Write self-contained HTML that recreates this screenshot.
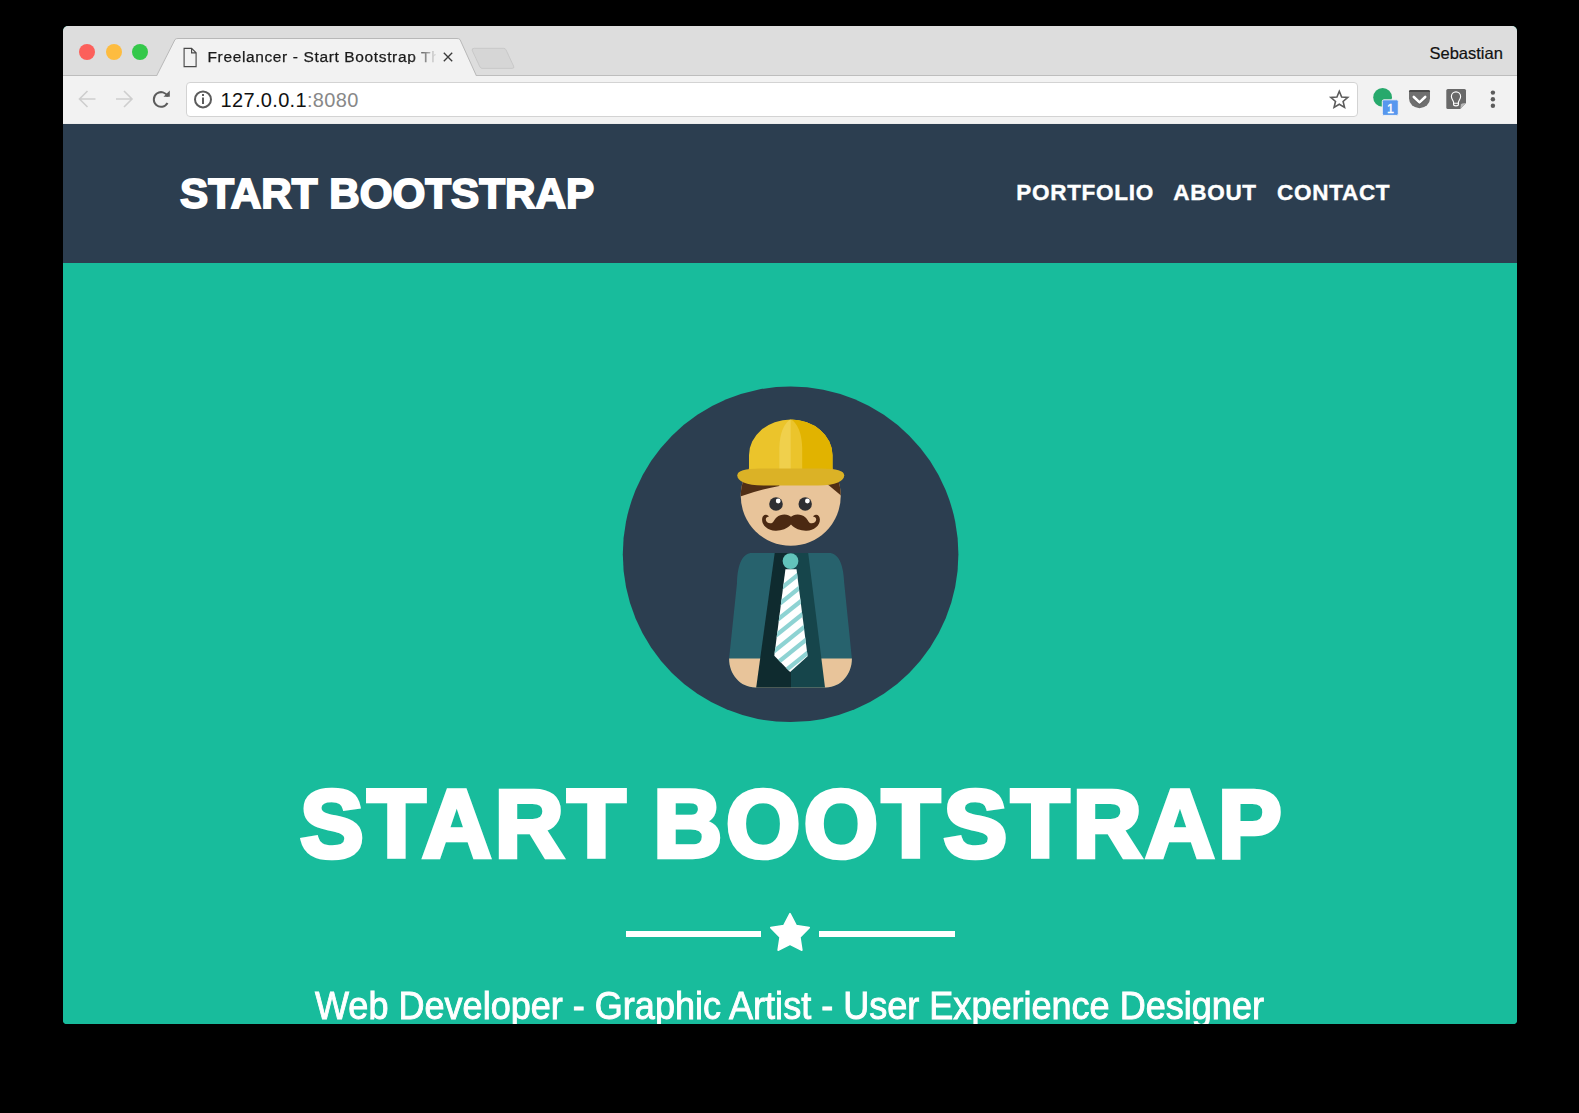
<!DOCTYPE html>
<html><head><meta charset="utf-8">
<style>
html,body{margin:0;padding:0;}
body{width:1579px;height:1113px;background:#000;position:relative;overflow:hidden;font-family:"Liberation Sans",sans-serif;}
.a{position:absolute;}
#win{left:63px;top:26px;width:1454px;height:998px;border-radius:5px 5px 4px 4px;overflow:hidden;background:#18bc9c;}
#tabstrip{left:0;top:0;width:1454px;height:50px;background:#dddddd;}
.tabline{left:0;top:49px;width:1454px;height:1px;background:#bdbdbd;}
#toolbar{left:0;top:50px;width:1454px;height:48px;background:#f2f2f2;}
#tbline{left:0;top:97px;width:1454px;height:1px;background:#ececec;}
#nav{left:0;top:98px;width:1454px;height:139px;background:#2c3e50;}
#hero{left:0;top:237px;width:1454px;height:761px;background:#18bc9c;}
.light{width:16px;height:16px;border-radius:50%;top:18px;}
#omni{left:122.5px;top:56px;width:1172px;height:35px;background:#fff;border:1px solid #d3d3d3;border-radius:4px;box-sizing:border-box;}
.t{white-space:nowrap;line-height:1;}
</style></head>
<body>
<div id="win" class="a">
  <div id="tabstrip" class="a"></div>
  <!-- active tab -->
  <svg class="a" style="left:0;top:0" width="1454" height="51">
    <path d="M93.5,50 L112,13.5 Q113,12.5 115,12.5 L394,12.5 Q396,12.5 397,13.5 L413.5,50 Z" fill="#f2f2f2"/>
    <path d="M93.5,50 L112,13.5 Q113,12.5 115,12.5 L394,12.5 Q396,12.5 397,13.5 L413.5,50" fill="none" stroke="#b8b8b8" stroke-width="1"/>
    <path d="M411.3,22.3 L440.5,22.3 Q442.3,22.3 443.1,24 L450.6,40.2 Q451.4,42.4 449.3,42.4 L419.3,42.4 Q417.6,42.4 416.8,40.7 L409.3,24.6 Q408.6,22.3 411.3,22.3 Z" fill="#d6d6d6" stroke="#c6c6c6" stroke-width="0.9"/>
  </svg>
  <div class="a tabline" style="width:94px;top:49px"></div>
  <div class="a tabline" style="left:413px;width:1041px"></div>
  <div class="a light" style="left:16px;background:#fc605b;"></div>
  <div class="a light" style="left:42.5px;background:#fdbc40;"></div>
  <div class="a light" style="left:69px;background:#34c84a;"></div>
  <div id="toolbar" class="a"></div>
  <div id="tbline" class="a"></div>
  <div id="omni" class="a"></div>

  <!-- tab contents -->
  <svg class="a" style="left:119.5px;top:21px" width="15" height="21" viewBox="0 0 15 21">
    <path d="M1.1,1.3 L8.6,1.3 L13.1,5.8 L13.1,19.6 L1.1,19.6 Z M8.6,1.3 L8.6,5.8 L13.1,5.8" fill="none" stroke="#4a4a4a" stroke-width="1.15" stroke-linejoin="miter"/>
  </svg>
  <div class="a t" style="left:144.5px;top:22.8px;font-size:15.5px;letter-spacing:0.63px;color:#1a1a1a;-webkit-text-stroke:0.25px #1a1a1a;width:228px;overflow:hidden;-webkit-mask-image:linear-gradient(to right,#000 0,#000 204px,rgba(0,0,0,0.08) 228px);">Freelancer - Start Bootstrap Th</div>
  <svg class="a" style="left:379px;top:25px" width="12" height="12" viewBox="0 0 12 12">
    <path d="M1.8,1.8 L10.2,10.2 M10.2,1.8 L1.8,10.2" stroke="#3a3a3a" stroke-width="1.35"/>
  </svg>
  <div class="a t" style="left:1366.5px;top:19.3px;font-size:16.5px;color:#111;-webkit-text-stroke:0.2px #111;">Sebastian</div>
  <!-- toolbar icons -->
  <svg class="a" style="left:0;top:49px" width="1454" height="48">
    <g fill="none" stroke="#cecece" stroke-width="1.6">
      <path d="M32.5,24 L16.5,24 M24.5,16 L16.5,24 L24.5,32"/>
      <path d="M53,24 L69,24 M61,16 L69,24 L61,32"/>
    </g>
    <g fill="none" stroke="#5c5c5c" stroke-width="2">
      <path d="M104.8,21.5 A7.3,7.3 0 1 0 104.5,28"/>
    </g>
    <path d="M100.5,21.8 L106.8,21.8 L106.8,15.6 Z" fill="#5c5c5c"/>
  </svg>
  <svg class="a" style="left:0;top:49px" width="1454" height="48">
    <circle cx="140" cy="24.4" r="8" fill="none" stroke="#5c5c5c" stroke-width="2"/>
    <rect x="139" y="22.5" width="2" height="6.5" fill="#5c5c5c"/>
    <rect x="139" y="19" width="2" height="2" fill="#5c5c5c"/>
    <path d="M1276.30,16.30 L1278.65,21.96 L1284.76,22.45 L1280.10,26.44 L1281.53,32.40 L1276.30,29.20 L1271.07,32.40 L1272.50,26.44 L1267.84,22.45 L1273.95,21.96 Z" fill="none" stroke="#5c5c5c" stroke-width="1.6" stroke-linejoin="miter"/>
    <circle cx="1319.6" cy="22.4" r="9.4" fill="#27a96c"/>
    <rect x="1319.3" y="24.8" width="16" height="15.6" rx="1.5" fill="#5797ee" stroke="#f2f2f2" stroke-width="1"/>
    <text x="1327.4" y="37.9" font-family="Liberation Sans" font-size="12.5" fill="#fff" stroke="#fff" stroke-width="0.4" text-anchor="middle">1</text>
    <path d="M1346,16.4 Q1346,14.9 1347.5,14.9 L1365.5,14.9 Q1367,14.9 1367,16.4 L1367,23.5 A10.5,9.7 0 0 1 1346,23.5 Z" fill="#6f6f6f"/>
    <path d="M1346,16.4 Q1346,14.9 1347.5,14.9 L1365.5,14.9 Q1367,14.9 1367,16.4 L1367,16.9 L1346,16.9 Z" fill="#4a4a4a"/>
    <path d="M1350.8,22.2 L1356.5,27.6 L1362.2,22.2" fill="none" stroke="#333" stroke-opacity="0.35" stroke-width="2.6" stroke-linecap="round" stroke-linejoin="round" transform="translate(0,0.8)"/>
    <path d="M1350.8,22 L1356.5,27.4 L1362.2,22" fill="none" stroke="#fff" stroke-width="2.6" stroke-linecap="round" stroke-linejoin="round"/>
    <path d="M1384.8,14 L1401.5,14 Q1403,14 1403,15.5 L1403,28.1 L1397.3,34 L1384.8,34 Q1383.3,34 1383.3,32.5 L1383.3,15.5 Q1383.3,14 1384.8,14 Z" fill="#696969"/>
    <path d="M1403,28.1 L1397.3,34 L1397.9,29.6 Q1398.1,28.6 1399.1,28.4 Z" fill="#b9b9b9"/>
    <path d="M1390.6,27.4 C1390.4,25.3 1388.4,24.3 1388.4,21.5 A4.6,4.6 0 0 1 1397.6,21.5 C1397.6,24.3 1395.6,25.3 1395.4,27.4 L1395.4,29.4 Q1395.4,30.8 1393,30.8 Q1390.6,30.8 1390.6,29.4 Z M1390.6,28.2 L1395.4,28.2" fill="none" stroke="#fff" stroke-width="1.15"/>
    <circle cx="1429.9" cy="17.6" r="2.2" fill="#5c5c5c"/>
    <circle cx="1429.9" cy="24.2" r="2.2" fill="#5c5c5c"/>
    <circle cx="1429.9" cy="30.8" r="2.2" fill="#5c5c5c"/>
  </svg>
  <div class="a t" style="left:157.5px;top:63.9px;font-size:20px;letter-spacing:0.34px;color:#111;">127.0.0.1<span style="color:#888">:8080</span></div>

  <div id="nav" class="a"></div>
  <div class="a t" style="left:117px;top:147px;font-size:42.2px;font-weight:bold;letter-spacing:0px;color:#fff;-webkit-text-stroke:1.9px #fff;">START BOOTSTRAP</div>
  <div class="a t" style="left:953.3px;top:156.2px;font-size:22.5px;font-weight:bold;letter-spacing:0.7px;color:#fff;-webkit-text-stroke:0.4px #fff;">PORTFOLIO</div>
  <div class="a t" style="left:1110.3px;top:156.2px;font-size:22.5px;font-weight:bold;letter-spacing:0.7px;color:#fff;-webkit-text-stroke:0.4px #fff;">ABOUT</div>
  <div class="a t" style="left:1214.1px;top:156.2px;font-size:22.5px;font-weight:bold;letter-spacing:0.7px;color:#fff;-webkit-text-stroke:0.4px #fff;">CONTACT</div>
  <div id="hero" class="a"></div>
  <div class="a t" style="left:237px;top:750.5px;font-size:95.5px;font-weight:bold;letter-spacing:3.6px;word-spacing:-6px;color:#fff;-webkit-text-stroke:4.6px #fff;">START BOOTSTRAP</div>

  <svg class="a" style="left:559px;top:360px" width="337" height="337" viewBox="622 386 337 337">
    <defs>
      <clipPath id="face"><circle cx="790.75" cy="495.8" r="50"/></clipPath>
      <clipPath id="dome"><path d="M749,476 L749,455 A41.75,35.5 0 0 1 832.5,455 L832.5,476 Z"/></clipPath>
      <clipPath id="body"><path d="M752,553 L829,553 C838,553 843.5,563 844.2,583 L851.9,658.5 C852,674 841,687.4 826,687.4 L755.5,687.4 C740,687.4 729,674 729.1,658.5 L737,583 C737.6,563 743,553 752,553 Z"/></clipPath>
      <clipPath id="tie"><path d="M785.4,569.3 L796.5,569.3 L807.6,656.3 L790.1,672 L774.3,655.7 Z"/></clipPath>
      <path id="mus" d="M791,524.6 C787,529 781,531 775.5,530.8 C768,530.5 762,525.5 762.1,519.5 C762.2,516 764,514.6 766,514.7 C767.5,514.8 768.8,515.8 768.8,516.8 C767.5,516.5 765.8,517.5 765.8,519.5 C765.8,522 768.5,523.6 771.2,523.2 C773.5,522.8 774.2,519.6 776.5,517.5 C779,515.4 781.5,514.6 784.4,514.6 C787.5,514.7 789.5,515.8 791,516.8 Z"/>
    </defs>
    <circle cx="790.6" cy="554.3" r="167.8" fill="#2c3e50"/>
    <!-- face -->
    <circle cx="790.75" cy="495.8" r="50" fill="#e8c49a"/>
    <g clip-path="url(#face)" fill="#512f15">
      <path d="M735,460 L735,497 L741,496.2 Q762,489 779.3,486 L779.3,460 Z"/>
      <path d="M826,460 L826,483 L841.5,496 L846,496 L846,460 Z"/>
    </g>
    <circle cx="776" cy="504" r="6.8" fill="#2e2f33"/>
    <circle cx="805.2" cy="504" r="6.7" fill="#2e2f33"/>
    <circle cx="778.2" cy="501" r="2.4" fill="#fff"/>
    <circle cx="807.4" cy="501" r="2.4" fill="#fff"/>
    <g fill="#4b2912">
      <use href="#mus"/>
      <use href="#mus" transform="translate(1582,0) scale(-1,1)"/>
    </g>
    <!-- helmet -->
    <g clip-path="url(#dome)">
      <rect x="745" y="415" width="95" height="65" fill="#ebc42b"/>
      <path d="M779.3,480 L779.3,448 Q780,426 790.7,419 L790.7,480 Z" fill="#f0d04c"/>
      <path d="M802.2,480 L802.2,448 Q801.5,426 790.7,419 L840,419 L840,480 Z" fill="#e1b300"/>
    </g>
    <path d="M737.3,475.2 C737.3,470.6 745,468.6 760,468.4 L821.5,468.4 C836.5,468.6 844.2,470.6 844.2,475.2 C844.2,481.2 836,485.4 818,485.4 L763.5,485.4 C745.5,485.4 737.3,481.2 737.3,475.2 Z" fill="#dbb226"/>
    <!-- body -->
    <g clip-path="url(#body)">
      <rect x="725" y="550" width="130" height="140" fill="#27626d"/>
      <rect x="725" y="658.5" width="130" height="32" fill="#e8c49a"/>
    </g>
    <path d="M774.7,553 L791,553 L791,687.4 L756.2,687.4 Z" fill="#0f2b2f"/>
    <path d="M791,553 L808.2,553 L825,687.4 L791,687.4 Z" fill="#16454b"/>
    <path d="M785.4,569.3 L796.5,569.3 L807.6,656.3 L790.1,672 L774.3,655.7 Z" fill="#fff"/>
    <g clip-path="url(#tie)" stroke="#8ed3d3" stroke-width="4.3"><line x1="765" y1="601.2" x2="815" y2="561.2"/><line x1="765" y1="615.5" x2="815" y2="575.5"/><line x1="765" y1="629.8" x2="815" y2="589.8"/><line x1="765" y1="644.1" x2="815" y2="604.1"/><line x1="765" y1="658.4" x2="815" y2="618.4"/><line x1="765" y1="672.7" x2="815" y2="632.7"/><line x1="765" y1="687.0" x2="815" y2="647.0"/><line x1="765" y1="701.3" x2="815" y2="661.3"/></g>
    <circle cx="790.5" cy="561.1" r="7.9" fill="#62c4bb"/>
  </svg>
  <div class="a" style="left:563px;top:905px;width:135px;height:6px;background:#fff;"></div>
  <div class="a" style="left:756px;top:905px;width:136px;height:6px;background:#fff;"></div>
  <svg class="a" style="left:705px;top:885px" width="44" height="44" viewBox="0 0 44 44">
    <path d="M22.00,2.70 L28.11,14.49 L41.21,16.66 L31.89,26.11 L33.87,39.24 L22.00,33.30 L10.13,39.24 L12.11,26.11 L2.79,16.66 L15.89,14.49 Z" fill="#fff" stroke="#fff" stroke-width="1.6" stroke-linejoin="round"/>
  </svg>
  <div class="a t" style="left:252.3px;top:961px;font-size:38px;color:#fff;-webkit-text-stroke:0.9px #fff;transform:scaleX(0.9486);transform-origin:0 0;">Web Developer - Graphic Artist - User Experience Designer</div>

</div>
</body></html>
